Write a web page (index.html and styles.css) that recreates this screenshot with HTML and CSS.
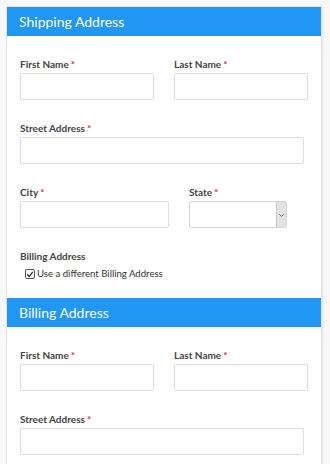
FILE: index.html
```html
<!DOCTYPE html>
<html>
<head>
<meta charset="utf-8">
<link rel="stylesheet" href="styles.css">
</head>
<body>
<div class="card">
  <div class="header">Shipping Address</div>
  <div class="section">
    <div class="row two">
      <div class="field"><label class="label">First Name<span class="req">*</span></label><input class="input" type="text"></div>
      <div class="field"><label class="label">Last Name<span class="req">*</span></label><input class="input" type="text"></div>
    </div>
    <div class="row">
      <div class="field"><label class="label">Street Address<span class="req">*</span></label><input class="input street" type="text"></div>
    </div>
    <div class="row citystate">
      <div class="field"><label class="label">City<span class="req">*</span></label><input class="input" type="text"></div>
      <div class="field"><label class="label">State<span class="req">*</span></label>
        <div class="select"><span class="select-value"></span><span class="arrow"><svg width="7" height="5" viewBox="0 0 7 5"><path d="M1 1 L3.5 3.5 L6 1" fill="none" stroke="#777" stroke-width="1"/></svg></span></div>
      </div>
    </div>
    <div class="billing-opt">
      <div class="label">Billing Address</div>
      <div class="check-row"><span class="checkbox"><svg width="9" height="9" viewBox="0 0 9 9"><path d="M1.5 4.5 L3.6 6.8 L7.6 1.6" fill="none" stroke="#222" stroke-width="1.4"/></svg></span><span class="check-text">Use a different Billing Address</span></div>
    </div>
  </div>
  <div class="header">Billing Address</div>
  <div class="section">
    <div class="row two">
      <div class="field"><label class="label">First Name<span class="req">*</span></label><input class="input" type="text"></div>
      <div class="field"><label class="label">Last Name<span class="req">*</span></label><input class="input" type="text"></div>
    </div>
    <div class="row">
      <div class="field"><label class="label">Street Address<span class="req">*</span></label><input class="input street" type="text"></div>
    </div>
  </div>
</div>
</body>
</html>
```
FILE: styles.css
```css
html, body {
  margin: 0;
  padding: 0;
  height: 464px;
  overflow: hidden;
}
body {
  background: #f8f8f8;
  font-family: Lato, "Open Sans", sans-serif;
  padding: 6px 0 0 6px;
  box-sizing: border-box;
}
.card {
  width: 316px;
  box-sizing: border-box;
  background: #fff;
  border: 1px solid #e2e2e2;
  box-shadow: 1px 1px 2px rgba(0,0,0,0.08);
}
.header {
  height: 29px;
  background: #2196f3;
  color: #fff;
  font-size: 14px;
  line-height: 29px;
  padding-left: 12px;
}
.section {
  padding: 21px 13px 17px 13px;
}
.row {
  display: grid;
  grid-template-columns: 284px;
}
.row.two {
  grid-template-columns: 134px 134px;
  column-gap: 20px;
}
.row.citystate {
  grid-template-columns: 149px 98px;
  column-gap: 20px;
}
.field {
  display: flex;
  flex-direction: column;
  gap: 2px;
  margin-bottom: 21px;
}
.label {
  display: block;
  font-size: 10px;
  font-weight: 700;
  line-height: 14px;
  color: #444;
}
.req {
  color: #e8282e;
  margin-left: 2px;
}
.input {
  display: block;
  width: 100%;
  height: 27px;
  box-sizing: border-box;
  border: 1px solid #dcdcdc;
  border-radius: 2px;
  background: #fff;
  margin: 0;
  padding: 0 6px;
  outline: none;
}
.select {
  display: flex;
  height: 27px;
  box-sizing: border-box;
  border: 1px solid #d4d4d4;
  border-radius: 2px;
  background: #fff;
}
.select-value {
  flex: 1;
}
.arrow {
  width: 10px;
  background: #e2e2e2;
  border-left: 1px solid #c8c8c8;
  display: flex;
  align-items: center;
  justify-content: center;
  padding-top: 2px;
  box-sizing: border-box;
}
.billing-opt {
  display: flex;
  flex-direction: column;
  gap: 4px;
}
.check-row {
  display: flex;
  align-items: center;
  height: 14px;
  padding-left: 5px;
  gap: 2px;
}
.checkbox {
  width: 10px;
  height: 10px;
  box-sizing: border-box;
  border: 1px solid #555;
  border-radius: 2px;
  display: flex;
  align-items: center;
  justify-content: center;
}
.check-text {
  font-size: 9.6px;
  color: #333;
  line-height: 14px;
}
```
